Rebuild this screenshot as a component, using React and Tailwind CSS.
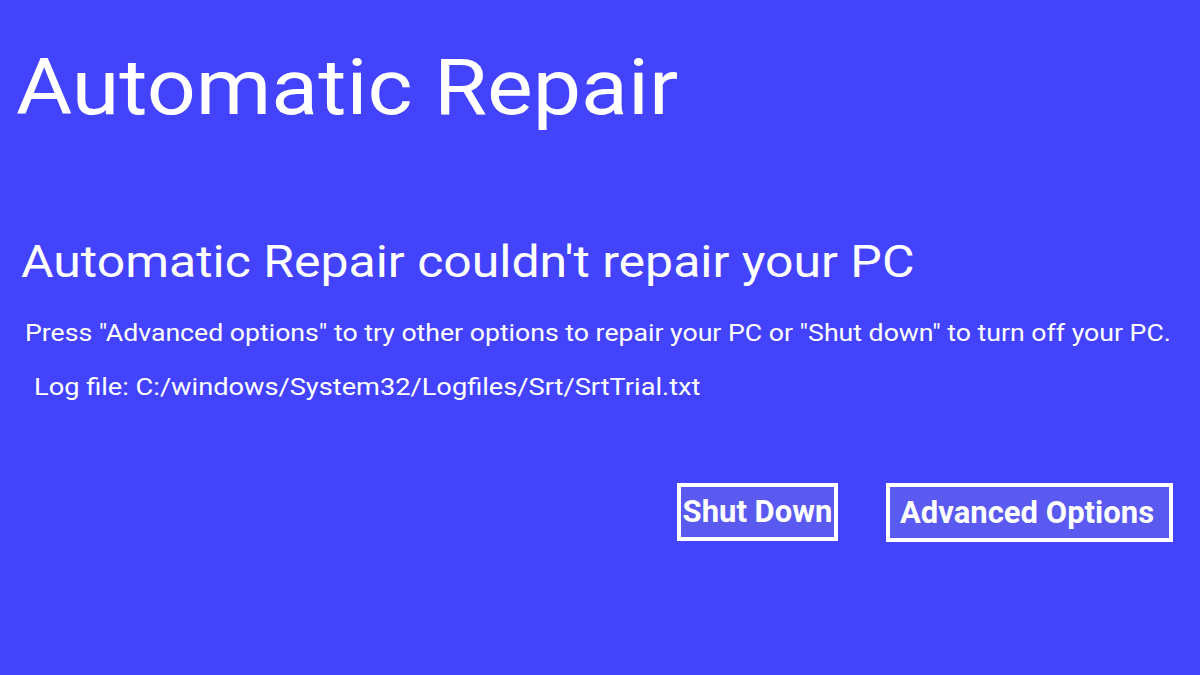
export default function App() {
  return (
    <div
      className="w-[1200px] h-[675px] bg-[#4343fb] text-white overflow-hidden flex flex-col"
      style={{ fontFamily: "Roboto, 'Noto Sans', sans-serif" }}
    >
      <h1 className="mt-[49px] ml-[16px] text-[78px] leading-none font-normal origin-left scale-x-[1.105] whitespace-nowrap">
        Automatic Repair
      </h1>
      <h2 className="mt-[112px] ml-[21px] text-[45px] leading-none font-normal origin-left scale-x-[1.11] whitespace-nowrap">
        Automatic Repair couldn't repair your PC
      </h2>
      <p className="mt-[37px] ml-[25px] text-[24px] leading-none origin-left scale-x-[1.11] whitespace-nowrap">
        Press "Advanced options" to try other options to repair your PC or "Shut down" to turn off your PC.
      </p>
      <p className="mt-[30px] ml-[34px] text-[24.5px] leading-none origin-left scale-x-[1.11] whitespace-nowrap">
        Log file: C:/windows/System32/Logfiles/Srt/SrtTrial.txt
      </p>
      <div className="mt-[83px] flex justify-end items-start gap-[48px] pr-[27px]">
        <button className="w-[161px] h-[58px] border-4 border-white bg-[#5a5af0] text-white text-[31px] font-bold leading-none flex items-center justify-center">
          Shut Down
        </button>
        <button className="w-[287px] h-[59px] border-4 border-white bg-[#5a5af0] text-white text-[31px] font-bold leading-none flex items-center pl-[10px]">
          Advanced Options
        </button>
      </div>
    </div>
  );
}
